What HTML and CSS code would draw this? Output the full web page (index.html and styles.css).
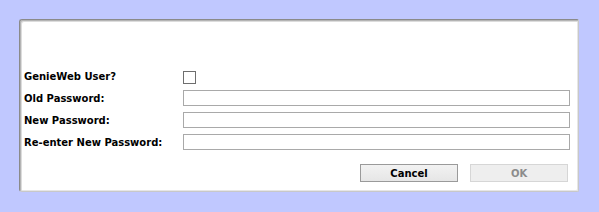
FILE: index.html
```html
<!DOCTYPE html>
<html>
<head>
<meta charset="utf-8">
<link rel="stylesheet" href="styles.css">
</head>
<body>
<div class="panel">
  <div class="form">
    <label class="lbl">GenieWeb User?</label>
    <div class="field check-field"><span class="checkbox"></span></div>
    <label class="lbl">Old Password:</label>
    <div class="field"><span class="input"></span></div>
    <label class="lbl">New Password:</label>
    <div class="field"><span class="input"></span></div>
    <label class="lbl">Re-enter New Password:</label>
    <div class="field"><span class="input"></span></div>
  </div>
  <div class="actions">
    <button class="btn">Cancel</button>
    <button class="btn disabled">OK</button>
  </div>
</div>
</body>
</html>
```
FILE: styles.css
```css
html, body {
  margin: 0;
  padding: 0;
  background: #c0c8ff;
}
body {
  padding: 19px;
  font-family: "DejaVu Sans", Verdana, sans-serif;
}
.panel {
  box-sizing: border-box;
  width: 560px;
  height: 173px;
  background: #fff;
  border-top: 1px solid #8a8a8a;
  border-left: 1px solid #8a8a8a;
  border-right: 1px solid #c8c8c8;
  border-bottom: 1px solid #c8c8c8;
  border-radius: 3px 2px 2px 3px;
  box-shadow: inset 1px 1px 0 #b4b4b4, inset 2px 2px 0 #dcdcdc, inset -1px -1px 0 #e6e6e6;
  padding: 48px 0 0 4px;
}
.form {
  display: grid;
  grid-template-columns: 159px 387px;
  grid-auto-rows: 16px;
  row-gap: 6px;
}
.lbl {
  font-weight: bold;
  font-size: 10px;
  color: #000;
  display: flex;
  align-items: center;
  white-space: nowrap;
  padding-top: 1px;
}
.field {
  display: flex;
}
.check-field {
  align-items: flex-end;
}
.checkbox {
  box-sizing: border-box;
  width: 13px;
  height: 13px;
  border: 1px solid #6e6e6e;
  background: #fff;
}
.input {
  box-sizing: border-box;
  width: 387px;
  height: 16px;
  border: 1px solid #a9a9a9;
  background: #fff;
}
.actions {
  display: flex;
  gap: 12px;
  margin-top: 14px;
  padding-left: 336px;
}
.btn {
  box-sizing: border-box;
  width: 98px;
  height: 18px;
  padding: 0;
  border: 1px solid #9a9a9a;
  border-radius: 0;
  background: linear-gradient(#f2f2f2, #e6e6e6);
  font-family: "DejaVu Sans", Verdana, sans-serif;
  font-weight: bold;
  font-size: 10px;
  color: #000;
}
.btn.disabled {
  border-color: #d6d6d6;
  background: #eeeeee;
  color: #8c8c8c;
}
```
